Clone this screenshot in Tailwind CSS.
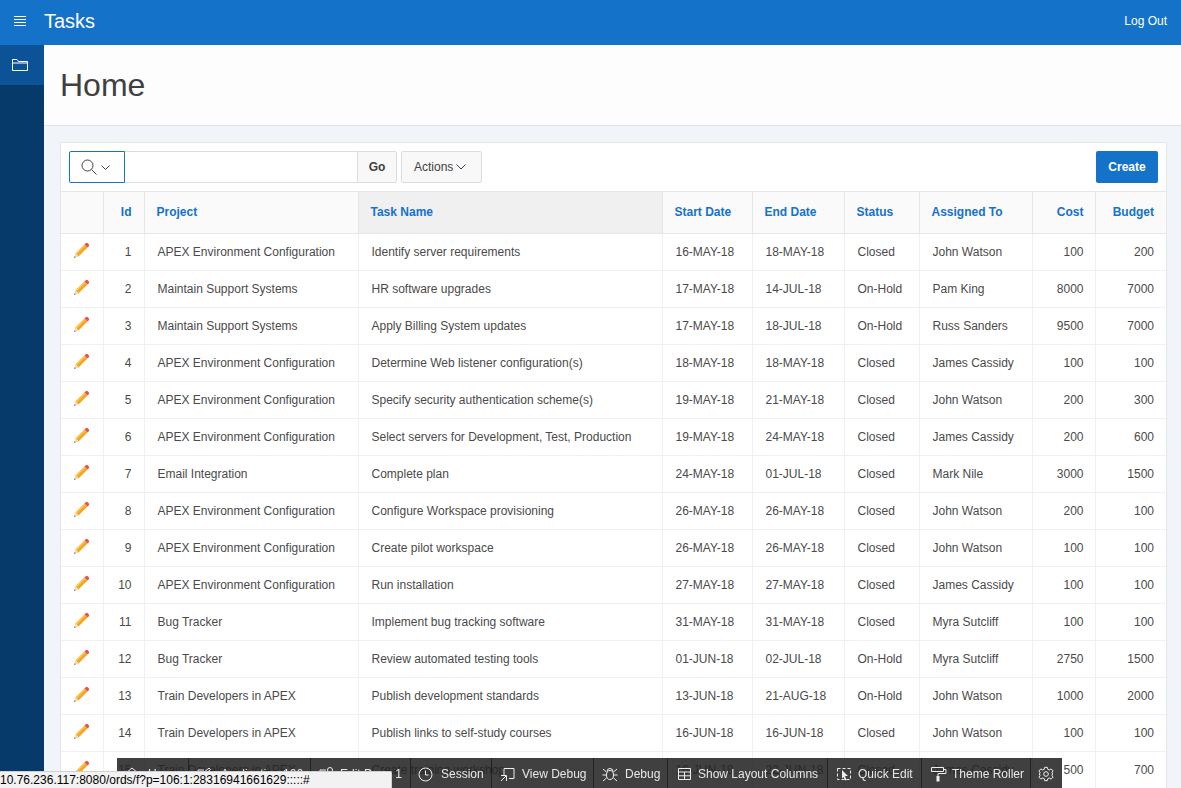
<!DOCTYPE html>
<html lang="en">
<head>
  <meta charset="UTF-8" />
  <title>Tasks</title>
  <script src="https://cdn.jsdelivr.net/npm/@tailwindcss/browser@4"></script>
</head>
<body class="h-[788px] overflow-hidden bg-[#f1f5f9] font-['Liberation_Sans',Arial,sans-serif] text-xs text-[#404040]">

  <!-- header -->
  <header class="h-[45px] bg-[#1472c9] flex items-center text-white">
    <div class="w-11 pl-[14px] -mt-[3px]">
      <svg class="block w-3 h-[10px]" viewBox="0 0 12 10" fill="none" stroke="#fff" stroke-width="1"><path d="M0 .5h12M0 3.500h12M0 6.500h12M0 9.500h12"/></svg>
    </div>
    <span class="text-[20px] leading-none -mt-[3px]">Tasks</span>
    <span class="ml-auto mr-[14px] -mt-[3px]">Log Out</span>
  </header>

  <div class="flex h-[743px]">
    <!-- side nav -->
    <nav class="w-11 shrink-0 bg-[#063a6b]">
      <div class="h-10 bg-[#0b5297] flex items-center pl-3">
        <svg class="w-4 h-3" viewBox="0 0 16 12" fill="none" stroke="#fff" stroke-width="1"><path d="M.5 11.500V.5h4.500l1.500 2h9v9zM.5 4h15"/></svg>
      </div>
    </nav>

    <main class="flex-1 min-w-0">
      <div class="h-[81px] bg-[#fdfdfe] border-b border-[#e0e3e6] pl-4 pt-[21px]">
        <h1 class="text-[32px] leading-[38px] text-[#404040]">Home</h1>
      </div>

      <section class="mt-4 ml-4 mr-[14px] bg-white border border-[#e6e6e6] border-b-0">
        <!-- report toolbar -->
        <div class="h-[49px] flex items-start pt-2 px-2 border-b border-[#e6e6e6]">
          <div class="flex h-8">
            <button class="w-14 h-8 rounded-l-[2px] border border-[#1472c9] bg-white flex items-center pl-[11px] gap-1">
              <svg class="w-4 h-4" viewBox="0 0 16 16" fill="none" stroke="#404040" stroke-width="1"><circle cx="6.500" cy="6.500" r="5.500"/><path d="M10.500 10.500l5 5"/></svg>
              <svg class="w-[9px] h-[5px]" viewBox="0 0 9 5" fill="none" stroke="#404040" stroke-width="1"><path d="M.5.5l4 4 4-4"/></svg>
            </button>
            <div class="w-[232px] border-y border-[#dcdcdc] bg-white"></div>
            <button class="w-10 border border-[#dcdcdc] rounded-r-[2px] bg-[#f8f8f8] font-bold">Go</button>
          </div>
          <button class="ml-1 w-[81px] h-8 border border-[#dcdcdc] rounded-[2px] bg-[#f8f8f8] flex items-center pl-3 gap-[3px]">
            Actions
            <svg class="w-[10px] h-[6px]" viewBox="0 0 10 6" fill="none" stroke="#404040" stroke-width="1"><path d="M.5.5l4.500 4.500 4.500-4.500"/></svg>
          </button>
          <button class="ml-auto w-[62px] h-8 rounded-[2px] bg-[#1472c9] text-white font-bold">Create</button>
        </div>

        <!-- report -->
        <table class="w-full table-fixed border-collapse">
          <colgroup>
            <col class="w-[42px]" /><col class="w-[41px]" /><col class="w-[214px]" /><col class="w-[304px]" /><col class="w-[90px]" />
            <col class="w-[92px]" /><col class="w-[75px]" /><col class="w-[113px]" /><col class="w-[63px]" /><col class="w-[71px]" />
          </colgroup>
          <thead>
            <tr class="h-[41px] bg-[#fafafa] text-[#1472c9] font-bold border-b border-[#e6e6e6]">
              <th class="border-r border-[#e6e6e6]"></th>
              <th class="border-r border-[#e6e6e6] text-right pr-3">Id</th>
              <th class="border-r border-[#e6e6e6] text-left pl-3">Project</th>
              <th class="border-r border-[#e6e6e6] text-left pl-3 bg-[#f0f0f0]">Task Name</th>
              <th class="border-r border-[#e6e6e6] text-left pl-3">Start Date</th>
              <th class="border-r border-[#e6e6e6] text-left pl-3">End Date</th>
              <th class="border-r border-[#e6e6e6] text-left pl-3">Status</th>
              <th class="border-r border-[#e6e6e6] text-left pl-3">Assigned To</th>
              <th class="border-r border-[#e6e6e6] text-right pr-[11px]">Cost</th>
              <th class="text-right pr-[12px]">Budget</th>
            </tr>
          </thead>
          <tbody id="rows" class="text-[#4a4a4a]"></tbody>
        </table>
      </section>
    </main>
  </div>

  <!-- developer toolbar -->
  <div class="fixed left-[117px] bottom-0 h-[30px] w-[945px] bg-[#242424]/[.87] text-[#e8e8e8] flex">
    <div class="w-[72px] flex items-center pt-[2px] pl-[7px] gap-2 border-r border-[#222]">
      <svg class="w-4 h-4 shrink-0" viewBox="0 0 16 16" fill="none" stroke="#eee"><path d="M1 8l7-6 7 6M3.500 7v7h9V7"/></svg>Home
    </div>
    <div class="w-[122px] flex items-center pt-[2px] pl-[7px] gap-[9px] border-r border-[#222]">
      <svg class="w-4 h-4 shrink-0" viewBox="0 0 16 16" fill="none" stroke="#eee"><path d="M13 9v5H2V4h6M6 8l7-6 1.500 1.500-7 6H6z"/></svg>Application 106
    </div>
    <div class="w-[100px] flex items-center pt-[2px] pl-[7px] gap-[6px] border-r border-[#222]">
      <svg class="w-4 h-4 shrink-0" viewBox="0 0 16 16" fill="none" stroke="#eee"><path d="M12 9v5H2V4h6"/><circle cx="12" cy="4" r="2.500"/></svg>Edit Page 1
    </div>
    <div class="w-[81px] flex items-center pt-[2px] pl-[7px] gap-2 border-r border-[#222]">
      <svg class="w-[15px] h-[15px] shrink-0" viewBox="0 0 15 15" fill="none" stroke="#eee"><circle cx="7.500" cy="7.500" r="6.500"/><path d="M7.500 3.500v4.500h3"/></svg>Session
    </div>
    <div class="w-[102px] flex items-center pt-[2px] pl-2 gap-[7px] border-r border-[#222]">
      <svg class="w-[15px] h-[15px] shrink-0" viewBox="0 0 15 15" fill="none" stroke="#eee"><path d="M4 9V1.500h10v10H9M1 8.500h5.500V14M6 9l-5 5"/></svg>View Debug
    </div>
    <div class="w-[74px] flex items-center pt-[2px] pl-2 gap-[7px] border-r border-[#222]">
      <svg class="w-4 h-4 shrink-0" viewBox="0 0 16 16" fill="none" stroke="#eee"><ellipse cx="8" cy="9" rx="3.500" ry="4.500"/><path d="M5 5.500a3 3 0 0 1 6 0M1 3l3.500 3M15 3l-3.500 3M.5 9h4M15.500 9h-4M1 15l3.500-3M15 15l-3.500-3"/></svg>Debug
    </div>
    <div class="w-[160px] flex items-center pt-[2px] pl-[9px] gap-[6px] border-r border-[#222]">
      <svg class="w-[15px] h-[14px] shrink-0" viewBox="0 0 15 14" fill="none" stroke="#eee"><path d="M1.500 1.500h12v11h-12zM1.500 5h12M1.500 8.800h12M7.500 5v7.500"/></svg>Show Layout Columns
    </div>
    <div class="w-[94px] flex items-center pt-[2px] pl-2 gap-[6px] border-r border-[#222]">
      <svg class="w-4 h-4 shrink-0" viewBox="0 0 16 16" fill="none" stroke="#eee" stroke-dasharray="3 2"><path d="M1.500 2.500h13v11h-13z"/><path d="M6 4l6 6H9l1.500 4-1.500.5L7.500 11 6 12.500z" fill="#eee" stroke="none"/></svg>Quick Edit
    </div>
    <div class="w-[109px] flex items-center pt-[2px] pl-2 gap-[5px] border-r border-[#222]">
      <svg class="w-[17px] h-4 shrink-0" viewBox="0 0 17 16" fill="none" stroke="#eee"><path d="M1.500 1.500h12v4h-12zM13.500 3.500h2.500v4H8v3"/><rect x="6.500" y="10" width="3" height="5.500" fill="#eee" stroke="none"/></svg>Theme Roller
    </div>
    <div class="flex-1 flex items-center justify-center pt-[2px] pr-[2px]">
      <svg class="w-4 h-4" viewBox="0 0 24 24" fill="none" stroke="#eee" stroke-width="1.500"><circle cx="12" cy="12" r="3.500"/><path d="M10 2h4l.7 3 2.300 1 2.700-1.600 2.800 2.800L20.900 10l1.100 2-1.100 2 1.600 2.800-2.800 2.800L17 18l-2.300 1-.7 3h-4l-.7-3L7 18l-2.700 1.600-2.800-2.800L3.100 14 2 12l1.100-2-1.600-2.800 2.800-2.800L7 6l2.300-1z"/></svg>
    </div>
  </div>

  <!-- link status bubble -->
  <div class="fixed left-0 bottom-0 w-[392px] h-[17px] bg-[#f2f2f2] border-t border-r border-[#d0d0d0] rounded-tr-[2px] text-black leading-[17px] whitespace-nowrap">10.76.236.117:8080/ords/f?p=106:1:28316941661629:::::#</div>

  <script>
    const tasks = [
      [1, "APEX Environment Configuration", "Identify server requirements", "16-MAY-18", "18-MAY-18", "Closed", "John Watson", 100, 200],
      [2, "Maintain Support Systems", "HR software upgrades", "17-MAY-18", "14-JUL-18", "On-Hold", "Pam King", 8000, 7000],
      [3, "Maintain Support Systems", "Apply Billing System updates", "17-MAY-18", "18-JUL-18", "On-Hold", "Russ Sanders", 9500, 7000],
      [4, "APEX Environment Configuration", "Determine Web listener configuration(s)", "18-MAY-18", "18-MAY-18", "Closed", "James Cassidy", 100, 100],
      [5, "APEX Environment Configuration", "Specify security authentication scheme(s)", "19-MAY-18", "21-MAY-18", "Closed", "John Watson", 200, 300],
      [6, "APEX Environment Configuration", "Select servers for Development, Test, Production", "19-MAY-18", "24-MAY-18", "Closed", "James Cassidy", 200, 600],
      [7, "Email Integration", "Complete plan", "24-MAY-18", "01-JUL-18", "Closed", "Mark Nile", 3000, 1500],
      [8, "APEX Environment Configuration", "Configure Workspace provisioning", "26-MAY-18", "26-MAY-18", "Closed", "John Watson", 200, 100],
      [9, "APEX Environment Configuration", "Create pilot workspace", "26-MAY-18", "26-MAY-18", "Closed", "John Watson", 100, 100],
      [10, "APEX Environment Configuration", "Run installation", "27-MAY-18", "27-MAY-18", "Closed", "James Cassidy", 100, 100],
      [11, "Bug Tracker", "Implement bug tracking software", "31-MAY-18", "31-MAY-18", "Closed", "Myra Sutcliff", 100, 100],
      [12, "Bug Tracker", "Review automated testing tools", "01-JUN-18", "02-JUL-18", "On-Hold", "Myra Sutcliff", 2750, 1500],
      [13, "Train Developers in APEX", "Publish development standards", "13-JUN-18", "21-AUG-18", "On-Hold", "John Watson", 1000, 2000],
      [14, "Train Developers in APEX", "Publish links to self-study courses", "16-JUN-18", "16-JUN-18", "Closed", "John Watson", 100, 100],
      [15, "Train Developers in APEX", "Create training workshop", "16-JUN-18", "22-JUN-18", "Closed", "James Cassidy", 500, 700]
    ];

    const pencil = `<svg class="w-[18px] h-[18px] ml-[11px] -mt-[2px]" viewBox="0 0 18 18">
      <path d="M3.500 11.500L12.500 2.500l3 3L6.500 14.500z" fill="#f5a623"/>
      <path d="M3.500 11.500L12.500 2.500l1 1L4.500 12.500z" fill="#fbc75b"/>
      <path d="M12.500 2.500l1.200-1.200a1.500 1.500 0 0 1 2.100 0l.9.9a1.500 1.500 0 0 1 0 2.100L15.500 5.500z" fill="#e9504f"/>
      <path d="M3.500 11.500l3 3L2 16z" fill="#f3d9ae"/>
      <path d="M2.700 14.200l1 1L2 16z" fill="#4a5560"/>
    </svg>`;

    document.getElementById("rows").innerHTML = tasks.map((t) => `
      <tr class="h-[37px] border-b border-[#f0f0f0]">
        <td class="border-r border-[#f0f0f0]">${pencil}</td>
        <td class="border-r border-[#f0f0f0] text-right pr-[12px]">${t[0]}</td>
        <td class="border-r border-[#f0f0f0] pl-[13px]">${t[1]}</td>
        <td class="border-r border-[#f0f0f0] pl-[13px]">${t[2]}</td>
        <td class="border-r border-[#f0f0f0] pl-[13px]">${t[3]}</td>
        <td class="border-r border-[#f0f0f0] pl-[13px]">${t[4]}</td>
        <td class="border-r border-[#f0f0f0] pl-[13px]">${t[5]}</td>
        <td class="border-r border-[#f0f0f0] pl-[13px]">${t[6]}</td>
        <td class="border-r border-[#f0f0f0] text-right pr-[11px]">${t[7]}</td>
        <td class="text-right pr-[12px]">${t[8]}</td>
      </tr>`).join("");
  </script>

</body>
</html>
